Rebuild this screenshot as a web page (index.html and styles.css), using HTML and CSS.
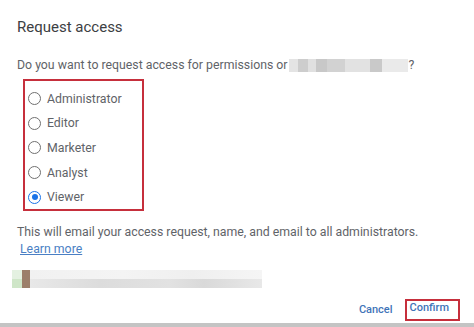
FILE: index.html
```html
<!DOCTYPE html>
<html>
<head>
<meta charset="utf-8">
<link rel="stylesheet" href="styles.css">
</head>
<body>
<div class="dialog">
  <h1 class="title">Request access</h1>
  <p class="question">Do you want to request access for permissions or <span class="blur-name"><i class="px p1"></i><i class="px p2"></i><i class="px p3"></i><i class="px p4"></i><i class="px p5"></i><i class="px p6"></i><i class="px p7"></i><i class="px p8"></i></span>?</p>
  <div class="roles">
    <label class="role"><span class="radio"></span>Administrator</label>
    <label class="role"><span class="radio"></span>Editor</label>
    <label class="role"><span class="radio"></span>Marketer</label>
    <label class="role"><span class="radio"></span>Analyst</label>
    <label class="role"><span class="radio checked"></span>Viewer</label>
  </div>
  <p class="note">This will email your access request, name, and email to all administrators.<br><a class="learn" href="#">Learn more</a></p>
  <div class="account">
    <div class="acc-row top"><i class="g"></i><i class="b"></i><i class="l1"></i></div>
    <div class="acc-row bottom"><i class="g"></i><i class="b"></i><i class="l2"></i></div>
  </div>
  <div class="actions">
    <button class="btn">Cancel</button>
    <button class="btn confirm">Confirm</button>
  </div>
</div>
<div class="edge"></div>
</body>
</html>
```
FILE: styles.css
```css
html, body {
  margin: 0;
  padding: 0;
  background: #fff;
}
body {
  width: 474px;
  height: 327px;
  overflow: hidden;
  font-family: Roboto, "Liberation Sans", sans-serif;
  color: #5f6368;
}
.dialog {
  height: 323px;
  padding: 0 14px 0 17px;
  box-sizing: border-box;
}
.title {
  margin: 0;
  padding-top: 17px;
  font-size: 15px;
  font-weight: 400;
  color: #3c4043;
  line-height: 20px;
}
.question {
  margin: 20px 0 0;
  font-size: 12.3px;
  line-height: 16px;
  height: 16px;
  display: flex;
  align-items: center;
}
.blur-name {
  display: inline-flex;
  width: 119px;
  height: 13px;
  margin: 0 1px 0 1px;
  background: #e8e8e8;
}
.px { display: block; height: 13px; }
.p1 { width: 9px; background: #e4e4e4; }
.p2 { width: 10px; background: #cdcdcd; }
.p3 { width: 8px; background: #e0e0e0; }
.p4 { width: 11px; background: #c8c8c8; }
.p5 { width: 18px; background: #d2d2d2; }
.p6 { width: 25px; background: #e2e2e2; }
.p7 { width: 12px; background: #c9c9c9; }
.p8 { width: 26px; background: #eaeaea; }
.roles {
  margin: 6px 0 0 6px;
  width: 117px;
  border: 2px solid #c62f3c;
  padding: 5.5px 0 0 0;
  display: flex;
  flex-direction: column;
}
.role {
  display: flex;
  align-items: center;
  height: 24.6px;
  font-size: 12.3px;
  color: #5f6368;
}
.radio {
  width: 11px;
  height: 11px;
  border: 1.5px solid #707070;
  border-radius: 50%;
  margin: 0 6px 0 3px;
  box-sizing: content-box;
  position: relative;
  flex: none;
}
.radio.checked {
  border-color: #1a73e8;
}
.radio.checked::after {
  content: "";
  position: absolute;
  left: 2.5px;
  top: 2.5px;
  width: 6px;
  height: 6px;
  border-radius: 50%;
  background: #1a73e8;
}
.note {
  margin: 13px 0 0;
  font-size: 12.3px;
  line-height: 17px;
}
.learn {
  display: inline-block;
  margin-left: 3px;
  color: #4a7fc4;
  text-decoration: underline;
}
.account {
  margin: 12px 0 0 -5px;
  width: 250px;
  height: 18px;
  display: flex;
  flex-direction: column;
}
.acc-row { display: flex; height: 9px; }
.acc-row i { display: block; height: 9px; }
.acc-row .g { width: 10px; background: #e4f1e1; }
.acc-row.bottom .g { background: #cfe6c8; }
.acc-row .b { width: 8px; background: #9c7f6a; }
.acc-row .l1 { flex: 1; background: linear-gradient(90deg, #f1f1f1, #f4f4f4 40%, #efefef 70%, #f5f5f5); }
.acc-row .l2 { flex: 1; background: linear-gradient(90deg, #e8e8e8, #dcdcdc 30%, #e2e2e2 60%, #d9d9d9 75%, #e8e8e8); }
.actions {
  display: flex;
  justify-content: flex-end;
  align-items: center;
  gap: 10px;
  margin-top: 11px;
}
.btn {
  font-family: Roboto, "Liberation Sans", sans-serif;
  font-size: 11px;
  font-weight: 500;
  line-height: 14px;
  color: #3f74b8;
  background: none;
  border: 2px solid transparent;
  padding: 0;
}
.btn.confirm {
  border-color: #c62f3c;
  padding: 0px 9px 4px 3px;
  height: 22px;
  box-sizing: border-box;
}
.edge {
  height: 4px;
  background: #c4c4c4;
}
```
